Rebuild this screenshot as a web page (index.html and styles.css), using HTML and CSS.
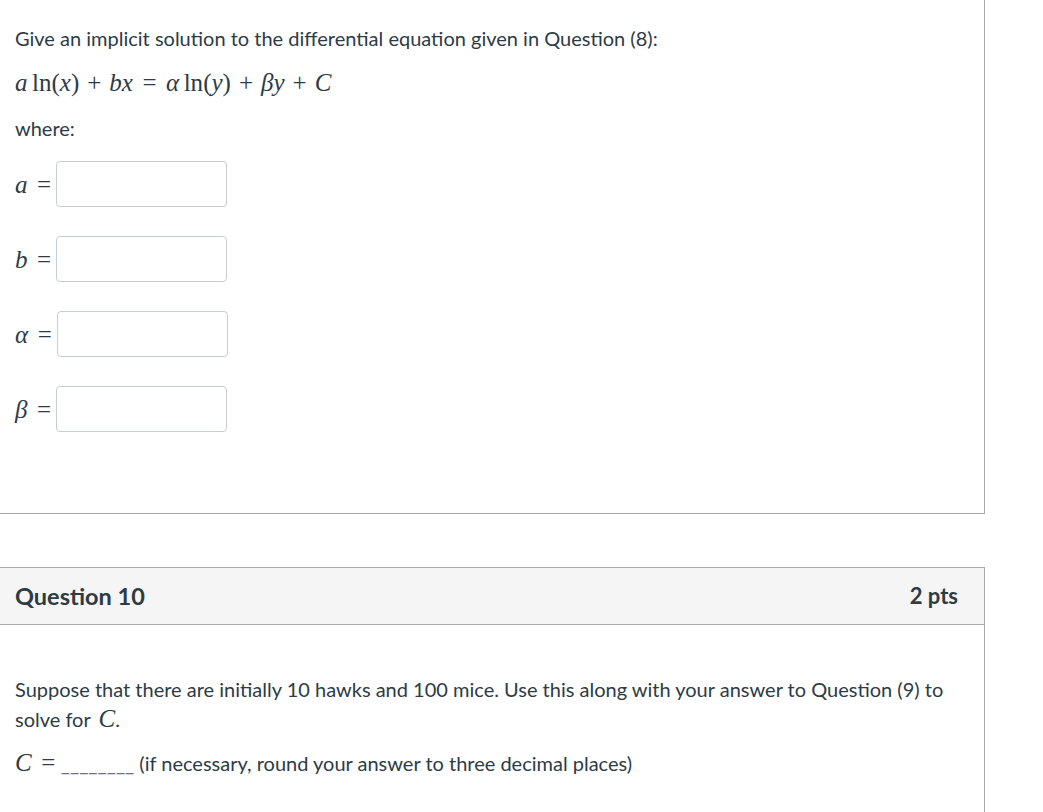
FILE: index.html
```html
<!DOCTYPE html>
<html lang="en">
<head>
<meta charset="utf-8">
<title>Quiz</title>
<link rel="stylesheet" href="styles.css">
</head>
<body>
<div class="page">
  <section class="card card-q9">
    <div class="card-body body-q9">
      <p>Give an implicit solution to the differential equation given in Question (8):</p>
      <p class="math-line"><span class="math"><span class="mi">a</span><span class="mop">ln</span><span class="mo">(</span><span class="mi">x</span><span class="mo">)</span><span class="mbin">+</span><span class="mi">b</span><span class="mi">x</span><span class="mrel">=</span><span class="mi">α</span><span class="mop">ln</span><span class="mo">(</span><span class="mi">y</span><span class="mo">)</span><span class="mbin">+</span><span class="mi">β</span><span class="mi">y</span><span class="mbin">+</span><span class="mi">C</span></span></p>
      <p>where:</p>
      <div class="fields">
        <div class="field"><span class="math"><span class="mi">a</span><span class="mrel">=</span></span><span class="answer"></span></div>
        <div class="field"><span class="math"><span class="mi">b</span><span class="mrel">=</span></span><span class="answer"></span></div>
        <div class="field"><span class="math"><span class="mi">α</span><span class="mrel">=</span></span><span class="answer"></span></div>
        <div class="field"><span class="math"><span class="mi">β</span><span class="mrel">=</span></span><span class="answer"></span></div>
      </div>
    </div>
  </section>

  <section class="card card-q10">
    <header class="card-header">
      <h2 class="q-title">Question 10</h2>
      <span class="q-pts">2 pts</span>
    </header>
    <div class="card-body body-q10">
      <p>Suppose that there are initially 10 hawks and 100 mice. Use this along with your answer to Question (9) to solve for <span class="math inline-c"><span class="mi">C</span></span>.</p>
      <p><span class="math"><span class="mi">C</span><span class="mrel tight">=</span></span><span class="blank">________</span> (if necessary, round your answer to three decimal places)</p>
    </div>
  </section>
</div>
</body>
</html>
```

FILE: styles.css
```css
html, body {
  margin: 0;
  padding: 0;
  background: #ffffff;
}

body {
  font-family: Lato, "Open Sans", sans-serif;
  font-size: 20px;
  line-height: 30px;
  color: #2d3b45;
}

.page {
  width: 986px;
  margin-left: -1px;
}

.card {
  border: 1px solid #a8a8a8;
  background: #ffffff;
}

.card-q9 {
  border-top: none;
}

.card-q10 {
  margin-top: 53px;
  border-bottom: none;
  min-height: 245px;
}

.card-body {
  padding: 0 14px 0 15px;
}

.body-q9 {
  padding-top: 23px;
  padding-bottom: 81px;
}

.card-body p {
  margin: 0 0 15px;
}

.math {
  font-family: "Liberation Serif", "DejaVu Serif", serif;
  font-size: 25px;
  line-height: 1;
  white-space: nowrap;
}

.mi {
  font-style: italic;
}

.mop {
  margin-left: 0.18em;
}

.mbin {
  margin: 0 0.32em;
}

.mrel {
  margin: 0 0.38em;
}

.mrel.tight {
  margin-right: 0.22em;
}

.inline-c {
  margin-left: 3px;
}

.fields {
  display: flex;
  flex-direction: column;
  gap: 29px;
  padding-top: 3px;
}

.field {
  display: flex;
  align-items: center;
  height: 46px;
}

.field .mrel {
  margin-right: 0.2em;
}

.answer {
  display: block;
  width: 169px;
  height: 44px;
  border: 1px solid #c7cdd1;
  border-radius: 4px;
  background: #ffffff;
}

.card-header {
  display: flex;
  align-items: center;
  justify-content: space-between;
  height: 56px;
  padding: 0 26px 0 15px;
  background: #f5f5f5;
  border-bottom: 1px solid #a8a8a8;
}

.q-title {
  margin: 0;
  font-size: 23.5px;
  font-weight: 700;
  color: #2d3b45;
}

.q-pts {
  font-size: 22px;
  font-weight: 700;
  color: #2d3b45;
}

.body-q10 {
  padding-top: 49px;
}

.body-q10 p:first-child {
  margin-bottom: 14px;
}

.blank {
  color: #6b7780;
  margin: 0;
}
```
